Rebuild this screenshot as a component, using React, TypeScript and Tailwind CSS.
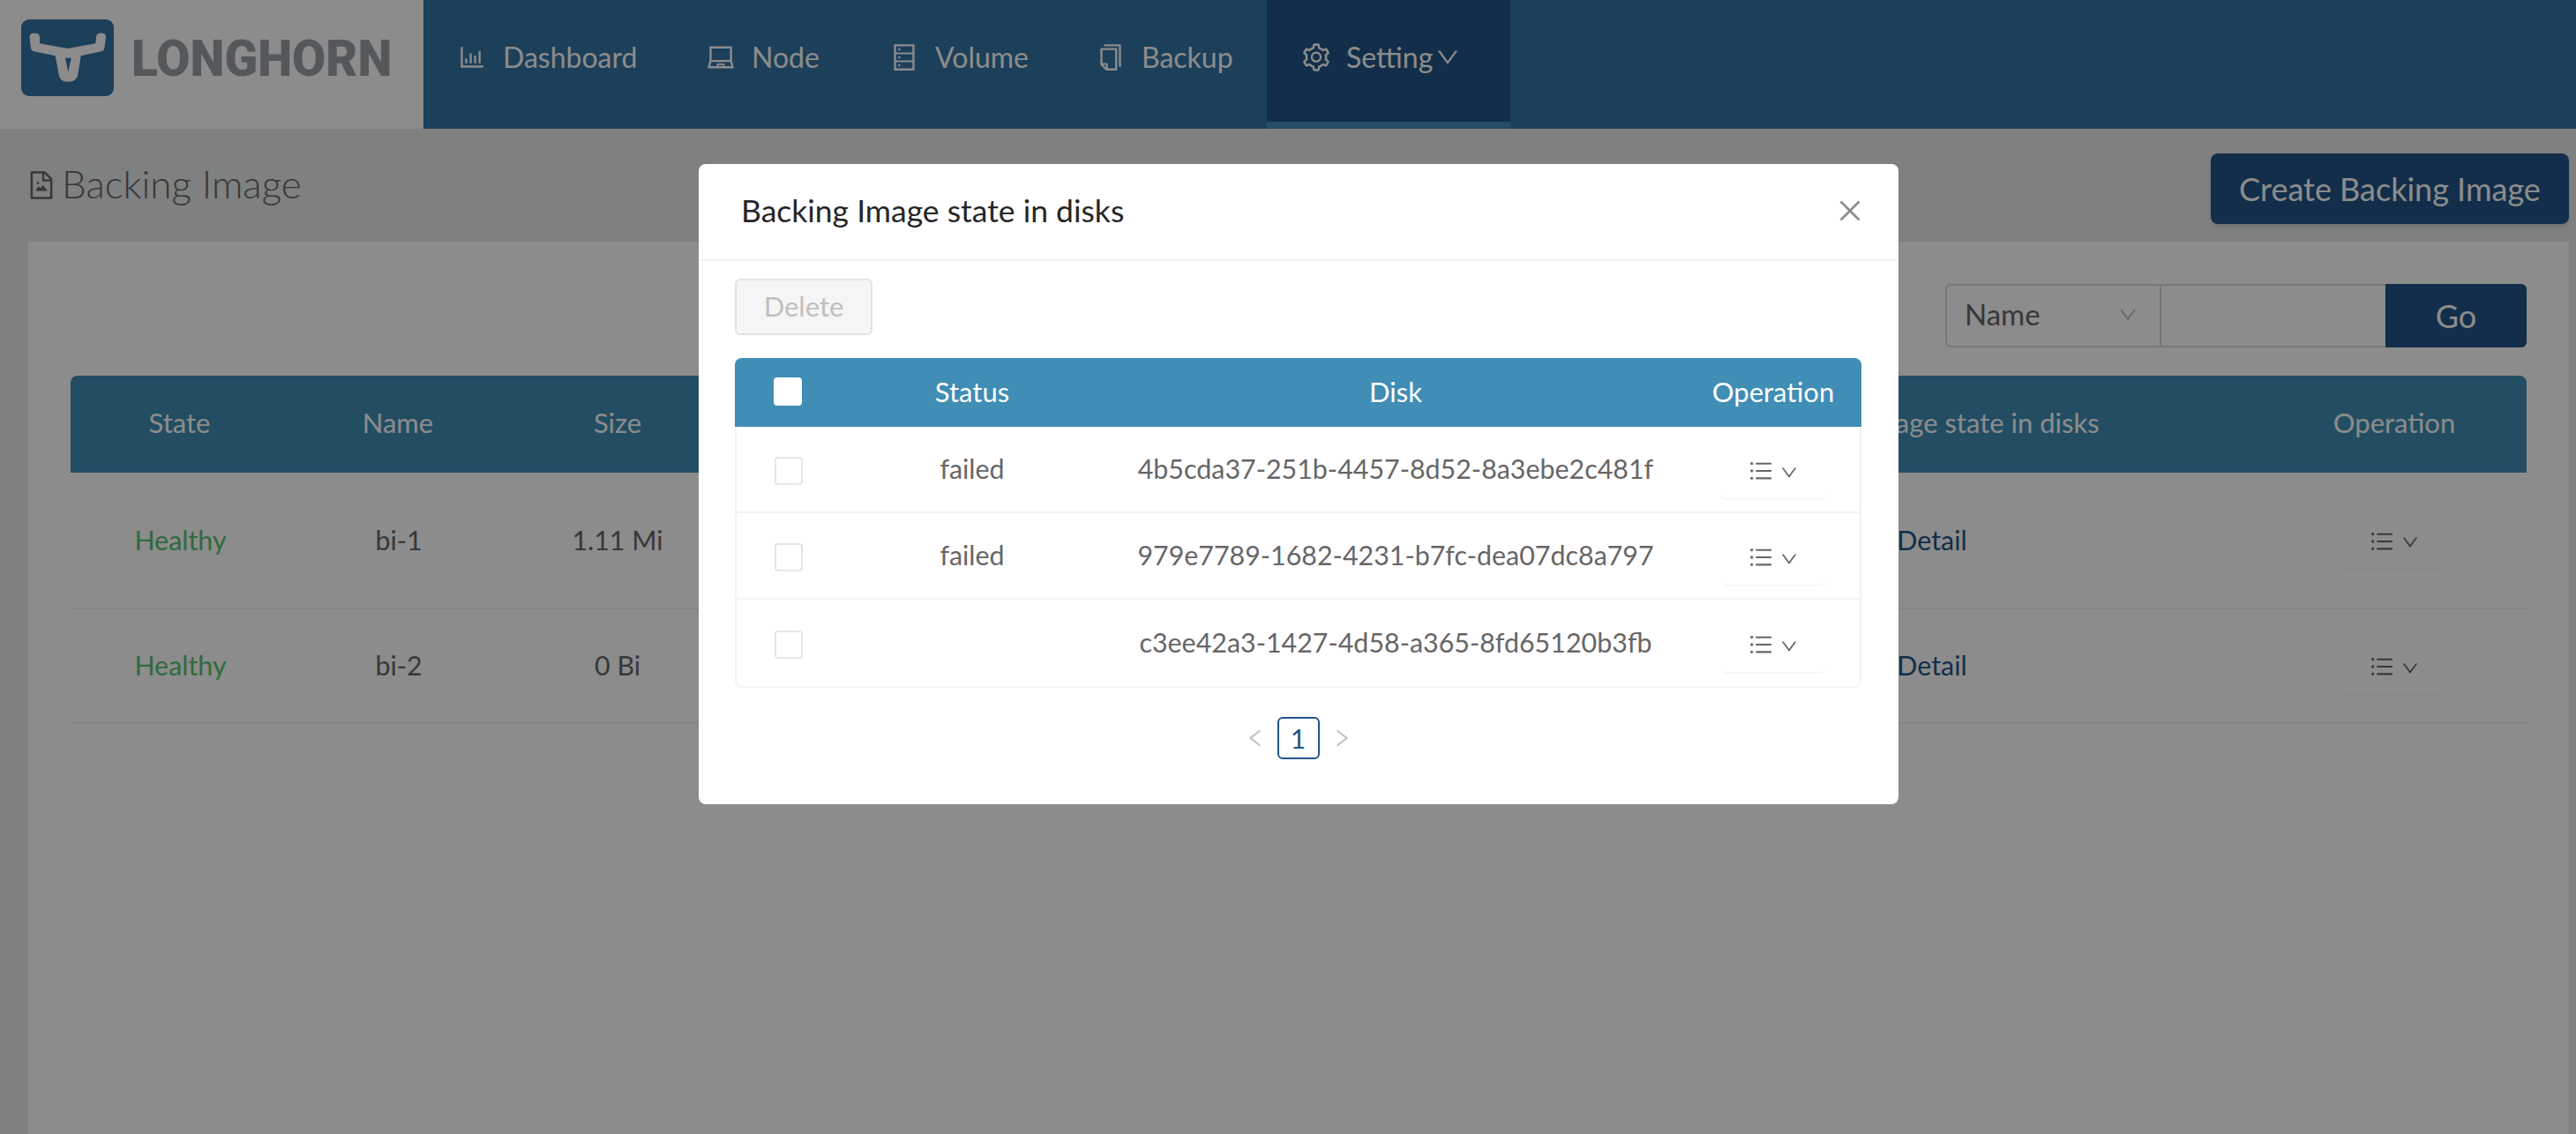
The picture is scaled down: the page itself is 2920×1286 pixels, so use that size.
import React from 'react';
import {
  AiOutlineBarChart,
  AiOutlineLaptop,
  AiOutlineDatabase,
  AiOutlineCopy,
  AiOutlineSetting,
  AiOutlineFileImage,
  AiOutlineUnorderedList,
  AiOutlineDown,
  AiOutlineClose,
  AiOutlineLeft,
  AiOutlineRight,
} from 'react-icons/ai';

const NAV = [
  { label: 'Dashboard', icon: AiOutlineBarChart, width: 'w-[282px]' },
  { label: 'Node', icon: AiOutlineLaptop, width: 'w-[208px]' },
  { label: 'Volume', icon: AiOutlineDatabase, width: 'w-[234px]' },
  { label: 'Backup', icon: AiOutlineCopy, width: 'w-[232px]' },
];

const BACKING_IMAGES = [
  { state: 'Healthy', name: 'bi-1', size: '1.11 Mi', height: 'h-[155px]' },
  { state: 'Healthy', name: 'bi-2', size: '0 Bi', height: 'h-[130px]' },
];

const DISKS = [
  { status: 'failed', disk: '4b5cda37-251b-4457-8d52-8a3ebe2c481f' },
  { status: 'failed', disk: '979e7789-1682-4231-b7fc-dea07dc8a797' },
  { status: '', disk: 'c3ee42a3-1427-4d58-a365-8fd65120b3fb' },
];

const Logo = () => (
  <svg viewBox="0 0 105 87" className="w-[105px] h-[87px] shrink-0">
    <rect width="105" height="87" rx="9" fill="#3373a4" />
    <path
      d="M9.5 19.7 Q10 15.5 15 15.5 Q20.5 15.5 21 19.7 L21 27.3 L52.7 33 L84.3 27.3 L85 19.7 Q85.5 15.5 90.5 15.5 Q96 15.5 96 19.7 L94.3 33 Q94 35.5 91 36.3 L67.7 41.3 L64.3 63 Q63 70.7 52.7 70.7 Q44 70.7 42.7 63 L38.7 41.3 L14.3 36.3 Q11.5 35.5 11 33 Z"
      fill="#ffffff"
    />
    <path d="M50 43.7 L56.7 43.7 L53.3 59.7 Z" fill="#3373a4" />
  </svg>
);

const OperationButton = () => (
  <div className="w-[118px] h-[68px] flex items-center justify-center gap-[6px] pt-[4px] border-b-2 border-[#f7f7f7] rounded-md text-[#666666]">
    <AiOutlineUnorderedList className="text-[30px]" />
    <AiOutlineDown className="text-[22px] mt-[3px]" />
  </div>
);

export default function App() {
  return (
    <div className="relative w-[2920px] h-[1286px] overflow-hidden bg-[#e7eaea] font-[Lato,sans-serif] text-[#666666]">
      {/* ナビゲーション */}
      <header className="flex h-[146px] bg-[#3373a4]">
        <div className="w-[480px] h-full bg-white flex items-start pt-[22px] pl-[24px] gap-[20px]">
          <Logo />
          <span className="mt-[8px] text-[58px] leading-[72px] font-black text-[#9ba1a7] origin-left scale-x-[0.955] font-[Roboto,sans-serif]">
            LONGHORN
          </span>
        </div>
        <nav className="flex text-white text-[32px]">
          {NAV.map(({ label, icon: Icon, width }) => (
            <div key={label} className={`${width} h-full flex items-center pl-[38px] gap-[18px] pb-[16px]`}>
              <Icon className="text-[34px]" />
              <span>{label}</span>
            </div>
          ))}
          <div className="w-[276px] h-full flex items-center pl-[38px] gap-[16px] pb-[8px] bg-[#215487] border-b-8 border-[#408db5]">
            <AiOutlineSetting className="text-[36px]" />
            <span className="flex items-center gap-[2px]">
              Setting
              <AiOutlineDown className="text-[30px]" />
            </span>
          </div>
        </nav>
      </header>

      {/* ページヘッダー */}
      <div className="h-[128px] flex items-start justify-between pl-[29px] pr-[8px] pt-[28px]">
        <div className="flex items-center gap-[5px] pt-[6px] text-[44px] leading-[56px] font-light">
          <AiOutlineFileImage className="text-[36px] mt-[4px]" />
          <span>Backing Image</span>
        </div>
        <button className="w-[406px] h-[80px] rounded-lg bg-[#215487] text-white text-[36px] shadow-md">
          Create Backing Image
        </button>
      </div>

      {/* 一覧 */}
      <main className="ml-[32px] mr-[8px] h-[1012px] bg-white px-[48px] pt-[48px]">
        <div className="flex justify-end">
          <div className="w-[245px] h-[72px] flex items-center justify-between pl-[20px] pr-[24px] pb-[2px] border-2 border-[#d9d9d9] rounded-l-md text-[33px]">
            <span>Name</span>
            <AiOutlineDown className="text-[24px] text-[#bfbfbf]" />
          </div>
          <div className="w-[254px] h-[72px] border-y-2 border-[#d9d9d9]" />
          <button className="w-[160px] h-[72px] rounded-r-md bg-[#215487] text-white text-[36px]">Go</button>
        </div>

        <div className="mt-[32px] h-[110px] flex items-center pb-[3px] rounded-t-lg bg-[#408db5] text-white text-[31px] text-center">
          <div className="w-[247px]">State</div>
          <div className="w-[248px]">Name</div>
          <div className="w-[250px]">Size</div>
          <div className="flex-1" />
          <div className="w-[748px]">Backing Image state in disks</div>
          <div className="w-[300px]">Operation</div>
        </div>
        {BACKING_IMAGES.map((b) => (
          <div key={b.name} className={`${b.height} flex items-center border-b-2 border-[#f0f0f0] text-[30.4px] text-center`}>
            <div className="w-[249px] text-[#57c270]">{b.state}</div>
            <div className="w-[246px]">{b.name}</div>
            <div className="w-[250px]">{b.size}</div>
            <div className="flex-1" />
            <div className="w-[748px] text-[#215487]">Detail</div>
            <div className="w-[300px] flex justify-center">
              <OperationButton />
            </div>
          </div>
        ))}
      </main>

      {/* モーダル */}
      <div className="absolute inset-0 bg-black/45 pl-[792px] pt-[186px]">
        <div className="w-[1360px] h-[726px] rounded-lg bg-white">
          <div className="h-[110px] flex items-center justify-between pl-[48px] pr-[38px] pb-[2px] border-b-2 border-[#f5f5f5]">
            <span className="text-[35.5px] text-[#262626]">Backing Image state in disks</span>
            <AiOutlineClose className="text-[34px] text-[#8c8c8c]" />
          </div>
          <div className="pl-[41px] pr-[42px] pt-[20px]">
            <button className="w-[156px] h-[64px] pb-[2px] rounded-md border-2 border-[#e3e3e3] bg-[#f5f5f5] text-[#bfbfbf] text-[31px]">
              Delete
            </button>
            <div className="mt-[26px] rounded-lg border-x-2 border-b-2 border-[#f3f3f3] text-[30.4px]">
              <div className="h-[78px] flex items-center pb-[2px] -mx-[2px] rounded-t-lg bg-[#408db5] text-white text-center text-[31px]">
                <div className="w-[120px] flex justify-center">
                  <span className="w-[32px] h-[32px] rounded bg-white" />
                </div>
                <div className="w-[298px]">Status</div>
                <div className="w-[662px]">Disk</div>
                <div className="w-[194px]">Operation</div>
              </div>
              {DISKS.map((d, i) => (
                <div
                  key={d.disk}
                  className={`h-[98px] flex items-center text-center ${i < DISKS.length - 1 ? 'border-b-2 border-[#f3f3f3]' : ''}`}
                >
                  <div className="w-[118px] flex justify-center pt-[3px]">
                    <span className="w-[32px] h-[32px] rounded border-2 border-[#e6e6e6]" />
                  </div>
                  <div className="w-[298px]">{d.status}</div>
                  <div className="w-[662px]">{d.disk}</div>
                  <div className="w-[194px] flex justify-center pt-[2px]">
                    <OperationButton />
                  </div>
                </div>
              ))}
            </div>
            <div className="mt-[33px] flex items-center justify-center gap-[12px] text-[#bfbfbf]">
              <AiOutlineLeft className="text-[26px]" />
              <span className="w-[48px] h-[48px] flex items-center justify-center rounded-md border-2 border-[#215487] text-[#215487] text-[30px]">
                1
              </span>
              <AiOutlineRight className="text-[26px]" />
            </div>
          </div>
        </div>
      </div>
    </div>
  );
}
